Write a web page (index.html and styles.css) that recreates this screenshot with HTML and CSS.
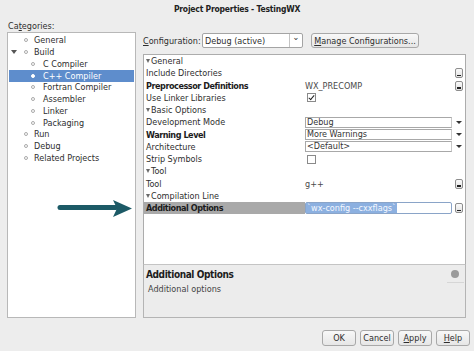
FILE: index.html
```html
<!DOCTYPE html>
<html lang="en">
<head>
    <meta charset="UTF-8">
    <title>Project Properties - TestingWX</title>
    <link rel="stylesheet" href="styles.css">
</head>
<body>
    <div class="window">
        <div class="titlebar">Project Properties - TestingWX</div>

        <div class="content">
            <!-- categories tree -->
            <div class="categories">
                <div class="cat-label">Ca<u>t</u>egories:</div>
                <ul class="tree">
                    <li class="lvl0"><span class="bullet"></span>General</li>
                    <li class="lvl0"><span class="expander"></span><span class="bullet"></span>Build</li>
                    <li class="lvl1"><span class="bullet"></span>C Compiler</li>
                    <li class="lvl1 selected"><span class="bullet"></span>C++ Compiler</li>
                    <li class="lvl1"><span class="bullet"></span>Fortran Compiler</li>
                    <li class="lvl1"><span class="bullet"></span>Assembler</li>
                    <li class="lvl1"><span class="bullet"></span>Linker</li>
                    <li class="lvl1"><span class="bullet"></span>Packaging</li>
                    <li class="lvl0"><span class="bullet"></span>Run</li>
                    <li class="lvl0"><span class="bullet"></span>Debug</li>
                    <li class="lvl0"><span class="bullet"></span>Related Projects</li>
                </ul>
            </div>

            <!-- properties -->
            <div class="props">
                <div class="config-row">
                    <span class="config-label"><u>C</u>onfiguration:</span>
                    <div class="combo">
                        <span class="combo-text">Debug (active)</span>
                        <span class="combo-btn">&#8964;</span>
                    </div>
                    <button class="btn manage"><u>M</u>anage Configurations...</button>
                </div>

                <div class="grid">
                    <div class="row group"><span class="label"><span class="tri"></span>General</span></div>
                    <div class="row"><span class="label">Include Directories</span><span class="value"></span><span class="extra"><span class="dots"></span></span></div>
                    <div class="row"><span class="label bold">Preprocessor Definitions</span><span class="value">WX_PRECOMP</span><span class="extra"><span class="dots"></span></span></div>
                    <div class="row"><span class="label">Use Linker Libraries</span><span class="value"><span class="check on"></span></span></div>
                    <div class="row group"><span class="label"><span class="tri"></span>Basic Options</span></div>
                    <div class="row"><span class="label">Development Mode</span><span class="value"><span class="choice">Debug</span></span><span class="extra"><span class="drop"></span></span></div>
                    <div class="row"><span class="label bold">Warning Level</span><span class="value"><span class="choice">More Warnings</span></span><span class="extra"><span class="drop"></span></span></div>
                    <div class="row"><span class="label">Architecture</span><span class="value"><span class="choice">&lt;Default&gt;</span></span><span class="extra"><span class="drop"></span></span></div>
                    <div class="row"><span class="label">Strip Symbols</span><span class="value"><span class="check"></span></span></div>
                    <div class="row group"><span class="label"><span class="tri"></span>Tool</span></div>
                    <div class="row"><span class="label">Tool</span><span class="value">g++</span><span class="extra"><span class="dots"></span></span></div>
                    <div class="row group"><span class="label"><span class="tri"></span>Compilation Line</span></div>
                    <div class="row selected"><span class="label bold">Additional Options</span><span class="value"><span class="field"><span class="hl">`wx-config --cxxflags`</span></span></span><span class="extra"><span class="dots"></span></span></div>
                </div>

                <div class="desc">
                    <div class="desc-title">Additional Options</div>
                    <div class="desc-text">Additional options</div>
                    <span class="desc-dot"></span>
                    <span class="desc-line"></span>
                </div>
            </div>
        </div>

        <div class="buttons">
            <button class="btn">OK</button>
            <button class="btn">Cancel</button>
            <button class="btn"><u>A</u>pply</button>
            <button class="btn"><u>H</u>elp</button>
        </div>

        <!-- callout arrow -->
        <svg class="arrow" width="80" height="22" viewBox="0 0 80 22">
            <path d="M4 9.5 H60" stroke="#1c5a66" stroke-width="5" stroke-linecap="round" fill="none"/>
            <path d="M57 2 L76 10.5 L57 19 L61 10.5 Z" fill="#1c5a66"/>
        </svg>
    </div>
</body>
</html>
```

FILE: styles.css
```css
* {
    box-sizing: border-box;
}
body {
    margin: 0;
    background-color: #ededed;
    font-family: "DejaVu Sans Condensed", "Liberation Sans", sans-serif;
    font-size: 9px;
    color: #2e2e2e;
}
.window {
    position: relative;
    width: 474px;
    height: 351px;
    background-color: #ededed;
}
.titlebar {
    height: 20px;
    line-height: 19px;
    text-align: center;
    font-weight: bold;
    font-size: 8.5px;
    letter-spacing: -0.2px;
    color: #222;
}
.content {
    display: flex;
    padding-left: 7px;
}

/* categories */
.categories {
    width: 129px;
    display: flex;
    flex-direction: column;
}
.cat-label {
    height: 12px;
    line-height: 12px;
    padding-left: 1px;
}
.tree {
    list-style: none;
    margin: 0;
    padding: 1.5px 0 0;
    height: 286px;
    background-color: white;
    border: 1px solid #b8b8b8;
}
.tree li {
    position: relative;
    display: flex;
    align-items: center;
    height: 11.75px;
    margin: 0 1px;
}
.tree li.lvl0 {
    padding-left: 15px;
}
.tree li.lvl1 {
    padding-left: 22px;
}
.bullet {
    width: 4px;
    height: 4px;
    border: 1px solid #a9a9a9;
    border-radius: 50%;
    margin-right: 6px;
}
.tree li.lvl1 .bullet {
    margin-right: 8px;
}
.tree li.selected {
    background-color: #5e8dcc;
    color: white;
}
.tree li.selected .bullet {
    border-color: white;
    background-color: white;
}
.expander {
    position: absolute;
    left: 2px;
    top: 4px;
    width: 0;
    height: 0;
    border-left: 3px solid transparent;
    border-right: 3px solid transparent;
    border-top: 4px solid #555;
}

/* right side */
.props {
    width: 323px;
    margin-left: 7px;
    display: flex;
    flex-direction: column;
    padding-top: 13px;
}
.config-row {
    display: flex;
    align-items: center;
    height: 15px;
}
.config-label {
    width: 59px;
}
.combo {
    display: flex;
    align-items: center;
    width: 101px;
    height: 15px;
    background-color: white;
    border: 1px solid #a4a4a4;
    border-radius: 2px;
}
.combo-text {
    flex: 1;
    padding-left: 2px;
}
.combo-btn {
    width: 13px;
    height: 100%;
    border-left: 1px solid #c4c4c4;
    text-align: center;
    line-height: 7px;
    font-size: 9px;
}
.btn {
    font-family: inherit;
    font-size: 9px;
    color: #2e2e2e;
    height: 15px;
    padding: 0 2px;
    white-space: nowrap;
    background: linear-gradient(#f8f8f8, #e6e6e6);
    border: 1px solid #a8a8a8;
    border-radius: 3px;
}
.manage {
    width: 108px;
    margin-left: 8px;
}

/* property grid */
.grid {
    margin-top: 6px;
    height: 211px;
    background-color: white;
    border: 1px solid #acacac;
    border-bottom-color: #c4c4c4;
}
.row {
    display: grid;
    grid-template-columns: 161px 147px 1fr;
    align-items: center;
    height: 12.25px;
}
.label {
    display: flex;
    align-items: center;
    height: 100%;
    padding-left: 2px;
    white-space: nowrap;
}
.bold {
    font-weight: bold;
    letter-spacing: -0.45px;
    color: #1c1c1c;
}
.value {
    display: flex;
    align-items: center;
    height: 100%;
    white-space: nowrap;
    color: #4a4a4a;
}
.extra {
    display: flex;
    align-items: center;
    justify-content: center;
    height: 100%;
}
.tri {
    width: 0;
    height: 0;
    margin-right: 1px;
    border-left: 2.5px solid transparent;
    border-right: 2.5px solid transparent;
    border-top: 4px solid #6a6a6a;
}
.row.selected .label {
    background-color: #a9a9a9;
}
.dots {
    width: 8px;
    height: 10px;
    border: 1px solid #8d8d8d;
    border-radius: 2px;
    background: linear-gradient(#fafafa, #e2e2e2);
    position: relative;
}
.dots::after {
    content: "";
    position: absolute;
    left: 1px;
    right: 1px;
    bottom: 1px;
    height: 1.5px;
    background-color: #222;
}
.check {
    width: 9px;
    height: 9px;
    margin-left: 2px;
    border: 1px solid #8a8a8a;
    background-color: white;
    position: relative;
}
.check.on::after {
    content: "";
    position: absolute;
    left: 2px;
    top: 0px;
    width: 2px;
    height: 5px;
    border-right: 1.5px solid #222;
    border-bottom: 1.5px solid #222;
    transform: rotate(40deg);
}
.choice {
    width: 147px;
    height: 11px;
    line-height: 9px;
    border: 1px solid #a8a8a8;
    border-right-color: #c8c8c8;
    padding-left: 1px;
    color: #333;
}
.drop {
    width: 0;
    height: 0;
    margin-left: 1px;
    border-left: 3px solid transparent;
    border-right: 3px solid transparent;
    border-top: 3px solid #333;
}
.field {
    width: 147px;
    height: 12px;
    border: 1px solid #8aa4c8;
    border-radius: 2px;
    background-color: white;
    display: flex;
    align-items: center;
}
.hl {
    background-color: #8cb0e0;
    color: #f4f8ff;
    padding: 0 1px;
    line-height: 10px;
}

/* description */
.desc {
    position: relative;
    height: 53px;
    border: 1px solid #b4b4b4;
    border-top: none;
    background-color: #ececec;
    padding: 3px 0 0 2px;
}
.desc-title {
    font-weight: bold;
    font-size: 10px;
    letter-spacing: -0.4px;
    color: #1c1c1c;
    line-height: 14px;
}
.desc-text {
    padding-left: 2px;
    line-height: 14px;
    color: #444;
}
.desc-dot {
    position: absolute;
    right: 6px;
    top: 5px;
    width: 8px;
    height: 8px;
    border-radius: 50%;
    background-color: #9a9a9a;
}
.desc-line {
    position: absolute;
    right: 1px;
    top: 17px;
    width: 17px;
    height: 1px;
    background-color: #d6d6d6;
}

/* bottom buttons */
.buttons {
    display: flex;
    justify-content: flex-end;
    gap: 4px;
    padding: 12px 4px 0 0;
}
.buttons .btn {
    width: 34px;
    height: 16px;
}

.arrow {
    position: absolute;
    left: 56px;
    top: 198px;
}
```
